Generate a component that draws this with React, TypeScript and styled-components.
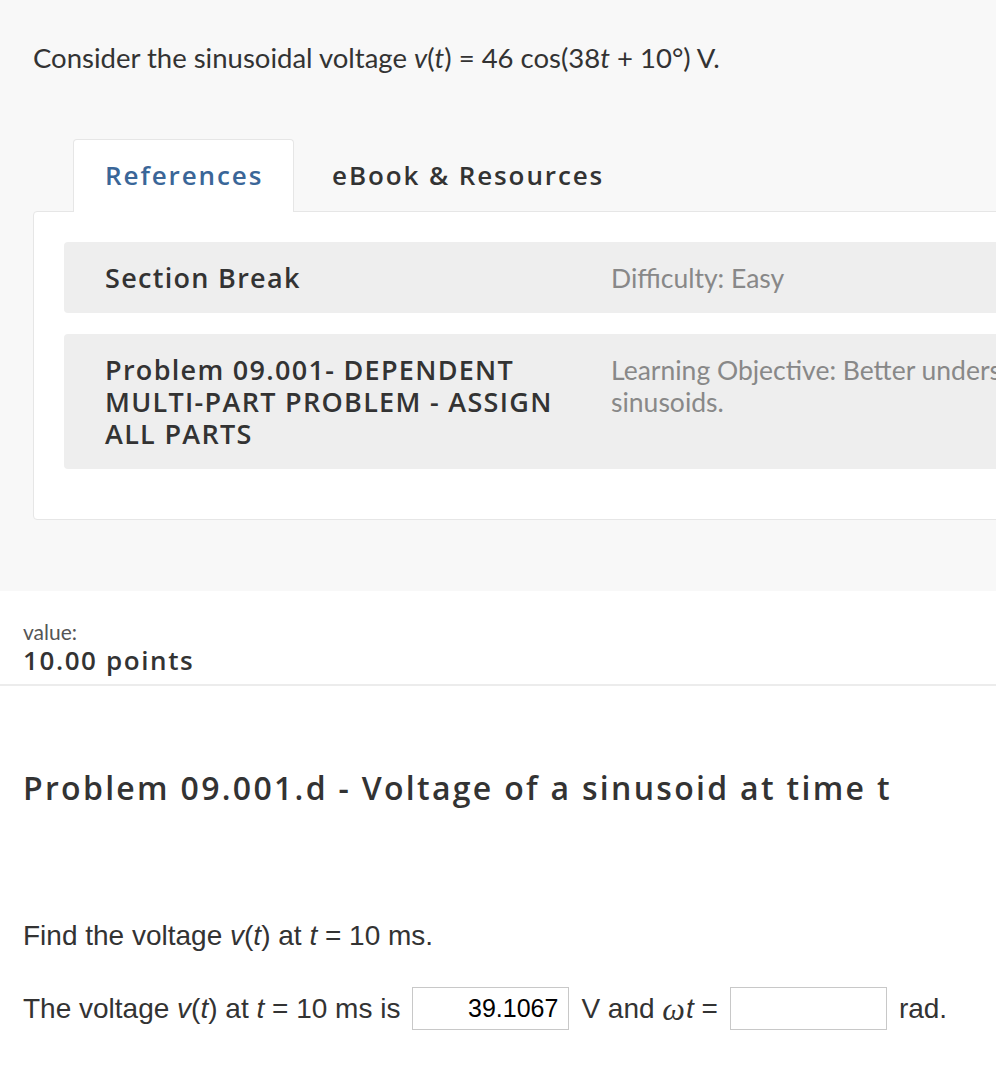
import React from "react";
import styled, { createGlobalStyle } from "styled-components";

const GlobalStyle = createGlobalStyle`
  html, body {
    margin: 0;
    padding: 0;
    background: #ffffff;
    overflow-x: hidden;
  }
  body {
    font-family: Lato, "Open Sans", sans-serif;
    color: #333333;
  }
`;

const Intro = styled.section`
  background: #f8f8f8;
  padding: 42px 0 71px 33px;
`;

const Question = styled.p`
  margin: 0 0 65px;
  font-size: 27.5px;
  line-height: 32px;
  color: #333333;

  i {
    font-style: italic;
  }
`;

const TabBar = styled.div`
  display: flex;
  margin-left: 40px;
  height: 72px;
`;

const Tab = styled.button<{ active?: boolean }>`
  font-family: "Open Sans", Lato, sans-serif;
  font-size: 26px;
  font-weight: 600;
  letter-spacing: 1.9px;
  height: 73px;
  margin-bottom: -1px;
  position: relative;
  z-index: 1;
  border: 1px solid ${({ active }) => (active ? "#e6e6e6" : "transparent")};
  border-bottom: none;
  border-radius: 4px 4px 0 0;
  background: ${({ active }) => (active ? "#ffffff" : "transparent")};
  color: ${({ active }) => (active ? "#3a6698" : "#333333")};
  cursor: pointer;
  width: ${({ active }) => (active ? "221px" : "auto")};
  text-align: left;
  padding: 0 20px 3px ${({ active }) => (active ? "31px" : "37px")};
`;

const Panel = styled.div`
  background: #ffffff;
  border: 1px solid #e6e6e6;
  border-radius: 4px;
  margin-right: -40px;
  padding: 30px 0 50px 30px;
  display: flex;
  flex-direction: column;
  gap: 21px;
`;

const InfoRow = styled.div`
  background: #eeeeee;
  border-radius: 4px;
  padding: 20px 0 19px 41px;
  display: grid;
  grid-template-columns: 466px 1fr;
  column-gap: 40px;
  line-height: 32px;
`;

const RowTitle = styled.div`
  font-family: "Open Sans", Lato, sans-serif;
  font-size: 27px;
  font-weight: 600;
  letter-spacing: 1.3px;
  color: #333333;
`;

const RowMeta = styled.div`
  font-size: 26.5px;
  color: #888888;
  white-space: nowrap;
  overflow: hidden;
`;

const ValueBlock = styled.div`
  padding: 28px 23px 9px;
  border-bottom: 2px solid #ececec;
`;

const ValueLabel = styled.div`
  font-size: 21px;
  line-height: 26px;
  color: #555555;
`;

const ValuePoints = styled.div`
  font-family: "Open Sans", Lato, sans-serif;
  font-size: 26px;
  line-height: 30px;
  font-weight: 600;
  letter-spacing: 1.6px;
  color: #333333;
`;

const Body = styled.section`
  padding: 82px 23px 40px;
`;

const Heading = styled.h2`
  margin: 0 0 113px;
  font-family: "Open Sans", Lato, sans-serif;
  font-size: 32px;
  line-height: 40px;
  font-weight: 600;
  letter-spacing: 2.3px;
  color: #333333;
`;

const Text = styled.p<{ gapBelow?: number }>`
  margin: 0 0 ${({ gapBelow }) => gapBelow ?? 0}px;
  font-family: "Liberation Sans", Arial, sans-serif;
  font-size: 28px;
  line-height: 30px;
  color: #333333;
  display: flex;
  align-items: center;
  flex-wrap: wrap;
  white-space: pre;
`;

const AnswerInput = styled.input`
  box-sizing: border-box;
  width: 157px;
  height: 43px;
  margin: 0 12px;
  border: 1px solid #c8c8c8;
  background: #ffffff;
  font-family: "Liberation Sans", Arial, sans-serif;
  font-size: 25px;
  color: #000000;
  text-align: right;
  padding: 0 10px;
  outline: none;
`;

const Omega = styled.span`
  font-family: "Liberation Serif", "DejaVu Serif", serif;
  font-style: italic;
  font-size: 32px;
  margin-right: 1px;
`;

export default function App() {
  return (
    <>
      <GlobalStyle />
      <Intro>
        <Question>
          Consider the sinusoidal voltage <i>v</i>(<i>t</i>) = 46 cos(38<i>t</i> + 10°) V.
        </Question>
        <TabBar>
          <Tab active>References</Tab>
          <Tab>eBook &amp; Resources</Tab>
        </TabBar>
        <Panel>
          <InfoRow>
            <RowTitle>Section Break</RowTitle>
            <RowMeta>Difficulty: Easy</RowMeta>
          </InfoRow>
          <InfoRow>
            <RowTitle>Problem 09.001- DEPENDENT MULTI-PART PROBLEM - ASSIGN ALL PARTS</RowTitle>
            <RowMeta>
              Learning Objective: Better understand
              <br />
              sinusoids.
            </RowMeta>
          </InfoRow>
        </Panel>
      </Intro>
      <ValueBlock>
        <ValueLabel>value:</ValueLabel>
        <ValuePoints>10.00 points</ValuePoints>
      </ValueBlock>
      <Body>
        <Heading>Problem 09.001.d - Voltage of a sinusoid at time t</Heading>
        <Text gapBelow={36}>
          Find the voltage <i>v</i>(<i>t</i>) at <i>t</i> = 10 ms.
        </Text>
        <Text>
          The voltage <i>v</i>(<i>t</i>) at <i>t</i> = 10 ms is
          <AnswerInput defaultValue="39.1067" />
          V and <Omega>ω</Omega><i>t</i> =
          <AnswerInput defaultValue="" />
          rad.
        </Text>
      </Body>
    </>
  );
}
